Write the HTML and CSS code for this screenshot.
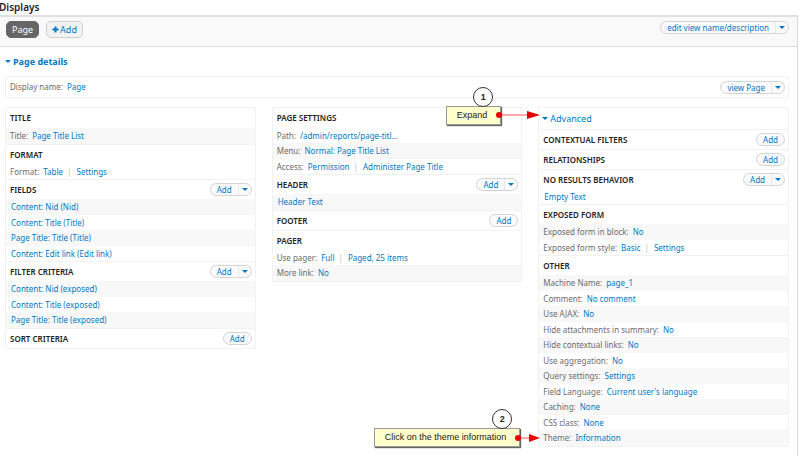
FILE: index.html
```html
<!DOCTYPE html>
<html lang="en">
<head>
    <meta charset="UTF-8">
    <meta name="viewport" content="width=device-width, initial-scale=1.0">
    <title>Displays</title>
    <link rel="stylesheet" href="styles.css">
</head>
<body>
    <h1>Displays</h1>
    <main class="displays">
        <div class="top-bar">
            <button class="tab active">Page</button>
            <button class="tab"><svg class="plus" viewBox="0 0 7 7"><path d="M3.5 0.5v6M0.5 3.5h6"/></svg>Add</button>
            <div class="dropbutton push"><a href="#">edit view name/description</a><button class="toggle" aria-label="More actions"></button></div>
        </div>

        <div class="content">
            <h2><a href="#" class="collapse">Page details</a></h2>

            <div class="display-name">
                <span>Display name:</span><a href="#">Page</a>
                <div class="dropbutton push"><a href="#">view Page</a><button class="toggle" aria-label="More actions"></button></div>
            </div>

            <div class="columns">
                <div class="column">
                    <section>
                        <h3>Title</h3>
                        <div class="row odd"><span>Title:</span><a href="#">Page Title List</a></div>
                    </section>
                    <section>
                        <h3>Format</h3>
                        <div class="row"><span>Format:</span><a href="#">Table</a><i>|</i><a href="#">Settings</a></div>
                    </section>
                    <section>
                        <h3>Fields <div class="dropbutton push"><a href="#">Add</a><button class="toggle" aria-label="More field actions"></button></div></h3>
                        <div class="row item odd"><a href="#">Content: Nid (Nid)</a></div>
                        <div class="row item"><a href="#">Content: Title (Title)</a></div>
                        <div class="row item odd"><a href="#">Page Title: Title (Title)</a></div>
                        <div class="row item"><a href="#">Content: Edit link (Edit link)</a></div>
                    </section>
                    <section>
                        <h3>Filter criteria <div class="dropbutton push"><a href="#">Add</a><button class="toggle" aria-label="More filter actions"></button></div></h3>
                        <div class="row item odd"><a href="#">Content: Nid (exposed)</a></div>
                        <div class="row item"><a href="#">Content: Title (exposed)</a></div>
                        <div class="row item odd"><a href="#">Page Title: Title (exposed)</a></div>
                    </section>
                    <section>
                        <h3>Sort criteria <div class="dropbutton push"><a href="#">Add</a></div></h3>
                    </section>
                </div>

                <div class="column">
                    <section>
                        <h3>Page settings</h3>
                        <div class="row"><span>Path:</span><a href="#">/admin/reports/page-titl...</a></div>
                        <div class="row odd"><span>Menu:</span><a href="#">Normal: Page Title List</a></div>
                        <div class="row"><span>Access:</span><a href="#">Permission</a><i>|</i><a href="#">Administer Page Title</a></div>
                    </section>
                    <section>
                        <h3>Header <div class="dropbutton push"><a href="#">Add</a><button class="toggle" aria-label="More header actions"></button></div></h3>
                        <div class="row item odd"><a href="#">Header Text</a></div>
                    </section>
                    <section>
                        <h3>Footer <div class="dropbutton push"><a href="#">Add</a></div></h3>
                    </section>
                    <section>
                        <h3>Pager</h3>
                        <div class="row"><span>Use pager:</span><a href="#">Full</a><i>|</i><a href="#">Paged, 25 items</a></div>
                        <div class="row odd"><span>More link:</span><a href="#">No</a></div>
                    </section>
                </div>

                <div class="column">
                    <div class="advanced">
                        <a href="#" class="collapse">Advanced</a>
                        <div class="callout">
                            <div class="note">Expand<b class="step">1</b></div>
                            <svg class="arrow" viewBox="0 0 50 12"><path class="line" d="M6 6H34"/><circle cx="6" cy="6" r="3"/><path d="M34 2l13 4-13 4z"/></svg>
                        </div>
                    </div>
                    <section>
                        <h3>Contextual filters <div class="dropbutton push"><a href="#">Add</a></div></h3>
                    </section>
                    <section>
                        <h3>Relationships <div class="dropbutton push"><a href="#">Add</a></div></h3>
                    </section>
                    <section>
                        <h3>No results behavior <div class="dropbutton push"><a href="#">Add</a><button class="toggle" aria-label="More no results actions"></button></div></h3>
                        <div class="row item"><a href="#">Empty Text</a></div>
                    </section>
                    <section>
                        <h3>Exposed form</h3>
                        <div class="row odd"><span>Exposed form in block:</span><a href="#">No</a></div>
                        <div class="row"><span>Exposed form style:</span><a href="#">Basic</a><i>|</i><a href="#">Settings</a></div>
                    </section>
                    <section>
                        <h3>Other</h3>
                        <div class="row odd"><span>Machine Name:</span><a href="#">page_1</a></div>
                        <div class="row"><span>Comment:</span><a href="#">No comment</a></div>
                        <div class="row odd"><span>Use AJAX:</span><a href="#">No</a></div>
                        <div class="row"><span>Hide attachments in summary:</span><a href="#">No</a></div>
                        <div class="row odd"><span>Hide contextual links:</span><a href="#">No</a></div>
                        <div class="row"><span>Use aggregation:</span><a href="#">No</a></div>
                        <div class="row odd"><span>Query settings:</span><a href="#">Settings</a></div>
                        <div class="row"><span>Field Language:</span><a href="#">Current user's language</a></div>
                        <div class="row odd"><span>Caching:</span><a href="#">None</a></div>
                        <div class="row"><span>CSS class:</span><a href="#">None</a></div>
                        <div class="row odd"><span>Theme:</span><a href="#">Information</a>
                            <div class="callout short">
                                <div class="note">Click on the theme information<b class="step">2</b></div>
                                <svg class="arrow" viewBox="0 0 31 12"><path class="line" d="M6 6H17"/><circle cx="6" cy="6" r="3"/><path d="M17 2l11 4-11 4z"/></svg>
                            </div>
                        </div>
                    </section>
                </div>
            </div>
        </div>
    </main>
</body>
</html>
```

FILE: styles.css
```css
* {
    box-sizing: border-box;
}

body {
    margin: 0;
    min-height: 100vh;
    display: flex;
    flex-direction: column;
    background: #fff;
    color: #6b6b6b;
    font-family: "Noto Sans", sans-serif;
    font-size: 8px;
    line-height: 16px;
}

h1, h2, h3 {
    margin: 0;
    color: #222;
    font-weight: 600;
}

h1 {
    margin-left: -1px;
    font-size: 10px;
    line-height: 15px;
}

a {
    color: #0078c4;
    text-decoration: none;
}

button {
    padding: 0;
    font: inherit;
    color: #0078c4;
    cursor: pointer;
}

.displays {
    flex: 1;
    margin-right: 2px;
    border-top: 2px solid #e0e0e0;
    border-right: 1px solid #d8d8d8;
}

.top-bar {
    display: flex;
    align-items: flex-start;
    gap: 7px;
    height: 30px;
    padding: 4px 8px 0 6px;
    background: #f9f9f9;
    border-bottom: 1px solid #ddd;
}

.tab {
    display: flex;
    align-items: center;
    gap: 1px;
    height: 17px;
    padding: 0 5px;
    border: 1px solid #d0d0d0;
    border-radius: 5px;
    background: #f2f2f2;
    font-size: 9px;
}

.tab.active {
    border-color: #666;
    background: #666;
    color: #fff;
}

.plus {
    width: 7px;
    height: 7px;
    fill: none;
    stroke: #0078c4;
    stroke-width: 2;
}

.push {
    margin-left: auto;
}

.content {
    padding: 7px 8px 9px 5px;
}

h2 {
    font-size: 9px;
    font-weight: bold;
    line-height: 15px;
}

.collapse {
    display: flex;
    align-items: center;
    gap: 2px;
}

.collapse::before,
.toggle::before {
    content: "";
    border: 3px solid transparent;
    border-top-color: #0078c4;
    border-bottom: 0;
}

.display-name {
    display: flex;
    align-items: center;
    gap: 4px;
    height: 22px;
    margin: 7px 0 9px;
    padding: 0 3px 0 4px;
    border: 1px solid #f2f2f2;
}

.dropbutton {
    display: flex;
    height: 13px;
    border: 1px solid #d4d4d4;
    border-radius: 7px;
    background: #fafafa;
    font-weight: normal;
    line-height: 11px;
    text-transform: none;
}

.dropbutton a {
    padding: 0 6px;
}

.toggle {
    display: flex;
    align-items: center;
    justify-content: center;
    width: 13px;
    border: 0;
    border-left: 1px solid #e8e8e8;
    background: none;
}

.columns {
    display: grid;
    grid-template-columns: repeat(3, 1fr);
    gap: 16px;
    align-items: start;
}

.column {
    border: 1px solid #f2f2f2;
}

section + section,
.advanced + section {
    border-top: 1px solid #f2f2f2;
}

h3 {
    display: flex;
    align-items: center;
    height: 19px;
    padding: 0 3px 0 4px;
    font-size: 8px;
    text-transform: uppercase;
}

section:first-child h3 {
    height: 20px;
}

.row {
    position: relative;
    display: flex;
    gap: 4px;
    height: 15px;
    padding: 0 4px;
}

.row.odd {
    height: 16px;
    background: #f8f8f8;
}

.row.item {
    padding-left: 5px;
}

.row i {
    margin-right: 1px;
    color: #bbb;
    font-style: normal;
}

.advanced {
    position: relative;
    display: flex;
    height: 21px;
    padding: 0 3px;
    font-size: 9px;
}

/* numbered notes pointing at a row from the left */
.callout {
    position: absolute;
    top: 50%;
    right: 100%;
    display: flex;
    align-items: center;
    margin-top: -13px;
    margin-right: -4px;
}

.callout.short {
    margin-top: -10px;
}

.note {
    position: relative;
    height: 19px;
    padding: 0 13px 0 10px;
    border: 1px solid #999;
    background: #ffffcc;
    box-shadow: 1px 1px 1px #666;
    color: #222;
    font-family: "Liberation Sans", Arial, sans-serif;
    font-size: 9px;
    line-height: 17px;
    white-space: nowrap;
}

.step {
    position: absolute;
    right: 7px;
    bottom: 17px;
    width: 20px;
    height: 20px;
    border: 1px solid #333;
    border-radius: 50%;
    background: #fff;
    line-height: 18px;
    text-align: center;
}

.arrow {
    position: relative;
    width: 50px;
    height: 12px;
    margin-left: -8px;
    fill: #e60000;
}

.short .arrow {
    width: 31px;
}

.line {
    stroke: #f55;
    stroke-width: 1;
}
```
